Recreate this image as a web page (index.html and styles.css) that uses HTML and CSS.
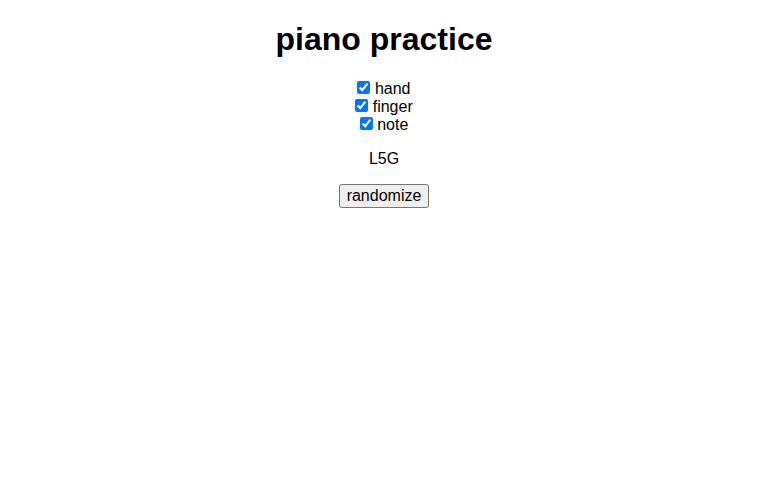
FILE: index.html
```html
<!DOCTYPE html>
<html lang="en">
<head>
  <meta charset="UTF-8" />
  <meta name="viewport" content="width=device-width, initial-scale=1.0"/>
  <title>piano practice</title>
  <link rel="stylesheet" href="styles.css">
</head>
<body>
  <h1>piano practice</h1>
  <div class="options">
    <label><input type="checkbox" id="hand" checked /> hand</label><br>
    <label><input type="checkbox" id="finger" checked /> finger</label><br>
    <label><input type="checkbox" id="note" checked /> note</label>
  </div>
  <p id="result">L5G</p>
  <button id="randomize">randomize</button>

  <script>
    const notes = ['A', 'B', 'C', 'D', 'E', 'F', 'G'];
    const pick = arr => arr[Math.floor(Math.random() * arr.length)];

    document.getElementById('randomize').onclick = () => {
      let out = '';
      if (document.getElementById('hand').checked) out += pick(['L', 'R']);
      if (document.getElementById('finger').checked) out += pick([1, 2, 3, 4, 5]);
      if (document.getElementById('note').checked) out += pick(notes);
      document.getElementById('result').innerText = out;
    };
  </script>
</body>
</html>
```

FILE: styles.css
```css
body {
  font-family: 'Liberation Sans', Arial, sans-serif;
  margin: 0;
  text-align: center;
  color: #000;
  background: #fff;
}

h1 { font-size: 2em; margin: 0.67em 0; }

.options input[type="checkbox"] {
  margin: 0;
  vertical-align: baseline;
}

button {
  font-family: 'Liberation Sans', Arial, sans-serif;
  font-size: 16px;
}
```
